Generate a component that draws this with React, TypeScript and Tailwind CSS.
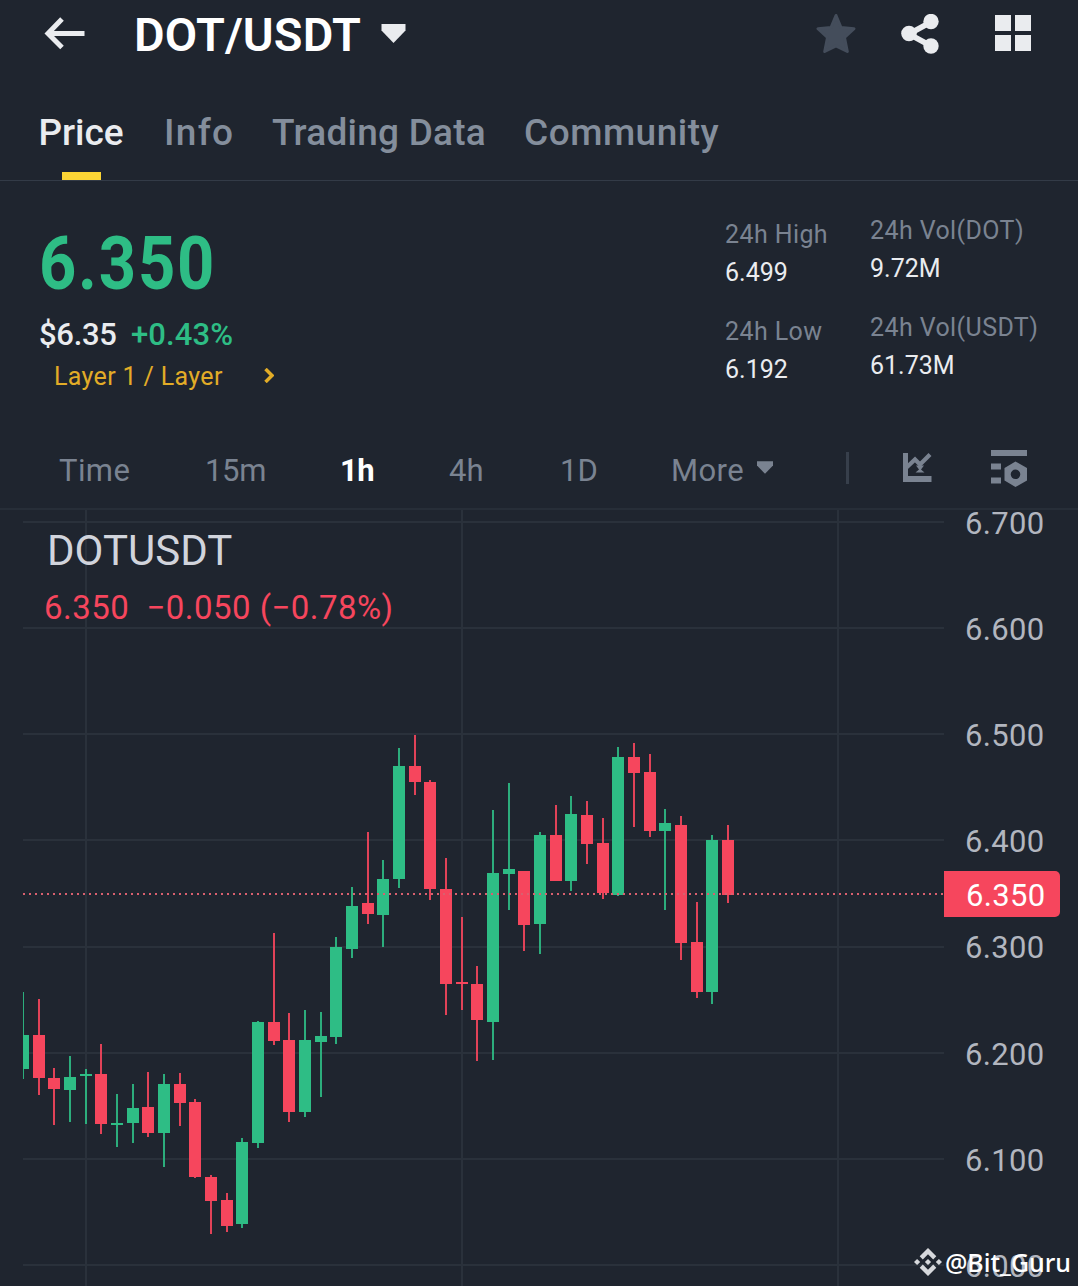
import { ReactNode } from "react";

type Candle = {
    x: number;
    high: number;
    top: number;
    bottom: number;
    low: number;
    up?: boolean;
};

const UP = "#2ebd85";
const DOWN = "#f6465d";

// [x, high, body top, body bottom, low, 1 = up / 0 = down]
const rawCandles: number[][] = [
    [17, 992, 1035, 1069, 1079, 1],
    [33, 999, 1035, 1078, 1095, 0],
    [48, 1068, 1078, 1089, 1125, 0],
    [64, 1056, 1077, 1090, 1122, 1],
    [80, 1069, 1074, 1076, 1124, 1],
    [95, 1044, 1074, 1124, 1134, 0],
    [111, 1094, 1123, 1125, 1147, 1],
    [127, 1084, 1108, 1123, 1143, 1],
    [142, 1072, 1107, 1133, 1137, 0],
    [158, 1074, 1084, 1133, 1167, 1],
    [174, 1073, 1084, 1103, 1126, 0],
    [189, 1099, 1102, 1177, 1178, 0],
    [205, 1175, 1177, 1201, 1234, 0],
    [221, 1193, 1200, 1226, 1232, 0],
    [236, 1138, 1142, 1224, 1228, 1],
    [252, 1021, 1022, 1143, 1148, 1],
    [268, 933, 1022, 1041, 1045, 0],
    [283, 1013, 1040, 1112, 1122, 0],
    [299, 1010, 1040, 1112, 1117, 1],
    [315, 1012, 1036, 1042, 1097, 1],
    [330, 937, 947, 1037, 1044, 1],
    [346, 887, 906, 949, 958, 1],
    [362, 832, 903, 914, 924, 0],
    [377, 860, 879, 915, 947, 1],
    [393, 748, 766, 879, 888, 1],
    [409, 735, 766, 782, 795, 0],
    [424, 780, 782, 889, 900, 0],
    [440, 858, 889, 984, 1015, 0],
    [456, 917, 982, 984, 1010, 0],
    [471, 966, 984, 1020, 1061, 0],
    [487, 810, 873, 1022, 1060, 1],
    [503, 783, 869, 874, 910, 1],
    [518, 871, 871, 925, 951, 0],
    [534, 832, 835, 924, 954, 1],
    [550, 805, 835, 881, 881, 0],
    [565, 796, 814, 881, 891, 1],
    [581, 801, 815, 844, 864, 0],
    [597, 818, 843, 893, 899, 0],
    [612, 747, 757, 895, 896, 1],
    [628, 743, 757, 773, 827, 0],
    [644, 754, 772, 831, 837, 0],
    [659, 809, 823, 831, 910, 1],
    [675, 816, 825, 943, 960, 0],
    [691, 902, 942, 992, 998, 0],
    [706, 835, 840, 992, 1004, 1],
    [722, 825, 840, 895, 903, 0],
];

const candles: Candle[] = rawCandles.map(([x, high, top, bottom, low, up]) => ({ x, high, top, bottom, low, up: up === 1 }));

const gridRows = [522, 628, 734, 840, 947, 1053, 1159, 1265];
const gridCols = [86, 462, 838];
const prices = ["6.700", "6.600", "6.500", "6.400", "6.300", "6.200", "6.100", "6.000"];

const Caret = ({ className }: { className: string }) => (
    <svg viewBox="0 0 24 19" className={className} fill="currentColor">
        <path d="M0 0h24v6.500L12 19 0 6.500z" />
    </svg>
);

const Header = () => (
    <header className="flex h-[90px] items-start pl-[44px] pr-[47px] text-[#eaecef]">
        <svg viewBox="0 0 42 34" className="mt-[16px] h-[34px] w-[42px]" fill="none" stroke="currentColor" strokeWidth="5">
            <path d="M40.500 17.500H5M18 3L4 17.500l14 14" />
        </svg>
        <h1 className="ml-[48px] w-[228px] whitespace-nowrap text-[47px] font-semibold leading-[70px] tracking-[0.1px] text-white">DOT/USDT</h1>
        <Caret className="ml-[19px] mt-[24px] h-[19px] w-[25px]" />
        <div className="ml-auto flex items-start">
            <svg viewBox="0 0 40 42" className="mt-[13px] h-[42px] w-[40px] text-[#444d5b]" fill="currentColor" stroke="currentColor" strokeWidth="3" strokeLinejoin="round">
                <path d="M20 2.500l5 12 13 1.200-9.500 8.800 2.800 14L20 32.800 8.700 38.500l2.800-14L2 15.700l13-1.200z" />
            </svg>
            <svg viewBox="0 0 38 40" className="ml-[45px] mt-[14px] h-[40px] w-[38px]" fill="currentColor">
                <path d="M8 20L30 8M8 20l22 12" stroke="currentColor" strokeWidth="5.500" />
                <circle cx="8" cy="19.500" r="7.800" />
                <circle cx="30" cy="7.500" r="7.700" />
                <circle cx="30" cy="32" r="7.700" />
            </svg>
            <div className="ml-[56px] mt-[15px] grid grid-cols-2 gap-x-[4px] gap-y-[4px]">
                <span className="h-[16px] w-[16px] bg-[#eaecef]" />
                <span className="h-[16px] w-[16px] bg-[#eaecef]" />
                <span className="h-[16px] w-[16px] bg-[#eaecef]" />
                <span className="h-[16px] w-[16px] bg-[#eaecef]" />
            </div>
        </div>
    </header>
);

const Tabs = () => (
    <nav className="flex h-[91px] items-start border-b border-[#333b47] pl-[38px] text-[37px] font-medium leading-[86px] text-[#848e9c]">
        <div className="flex h-[90px] w-[86px] flex-col items-center text-[#eaecef]">
            <span className="h-[82px] whitespace-nowrap tracking-[-0.1px]">Price</span>
            <span className="h-[8px] w-[39px] bg-[#fcd535]" />
        </div>
        <span className="ml-[40px] w-[108px] tracking-[1.3px]">Info</span>
        <span className="w-[252px] whitespace-nowrap tracking-[0.25px]">Trading Data</span>
        <span className="whitespace-nowrap tracking-[0.5px]">Community</span>
    </nav>
);

const Stat = ({ label, value }: { label: string; value: string }) => (
    <div className="h-[97px] whitespace-nowrap leading-[38px]">
        <p className="text-[25px] tracking-[0.4px] text-[#7a8391]">{label}</p>
        <p className="text-[25px] text-[#eaecef]">{value}</p>
    </div>
);

const Summary = () => (
    <section className="flex h-[247px] pl-[39px]">
        <div className="w-[686px]">
            <p className="mt-[41px] h-[84px] w-[220px] origin-left scale-x-[0.88] text-[74px] font-bold leading-[84px] tracking-[2px] text-[#2ebd85]">6.350</p>
            <div className="mt-[7px] flex h-[44px] text-[31px] font-medium leading-[44px]">
                <span className="w-[92px] tracking-[-0.3px] text-[#eaecef]">$6.35</span>
                <span className="tracking-[0.1px] text-[#2ebd85]">+0.43%</span>
            </div>
            <div className="flex h-[40px] items-center pl-[15px] text-[25px] text-[#e2ac27]">
                <span className="w-[210px] whitespace-nowrap tracking-[0.35px]">Layer 1 / Layer</span>
                <svg viewBox="0 0 10 15" className="mb-[4px] h-[15px] w-[10px]" fill="none" stroke="currentColor" strokeWidth="3.500">
                    <path d="M1.500 1l6.500 6.500-6.500 6.500" />
                </svg>
            </div>
        </div>
        <div className="mt-[35px] w-[145px]">
            <Stat label="24h High" value="6.499" />
            <Stat label="24h Low" value="6.192" />
        </div>
        <div className="mt-[31px]">
            <Stat label="24h Vol(DOT)" value="9.72M" />
            <Stat label="24h Vol(USDT)" value="61.73M" />
        </div>
    </section>
);

const Interval = ({ className, children }: { className: string; children: ReactNode }) => (
    <span className={`whitespace-nowrap pt-[6px] ${className}`}>{children}</span>
);

const Toolbar = () => (
    <div className="flex h-[82px] items-center border-b-2 border-[#272e38] pl-[59px] text-[31px] text-[#7a8391]">
        <Interval className="w-[146px] tracking-[0.4px]">Time</Interval>
        <Interval className="w-[135px] tracking-[-0.3px]">15m</Interval>
        <Interval className="w-[109px] font-bold tracking-[-0.5px] text-white">1h</Interval>
        <Interval className="w-[111px]">4h</Interval>
        <Interval className="w-[111px]">1D</Interval>
        <Interval className="w-[86px] tracking-[0.4px]">More</Interval>
        <Caret className="mb-[2px] h-[13px] w-[16px]" />
        <span className="ml-[73px] h-[32px] w-[3px] bg-[#373f4b]" />
        <svg viewBox="0 0 30 30" className="ml-[54px] h-[30px] w-[30px]" fill="currentColor">
            <path d="M0 0h5v23h23.500v6H0z" />
            <path d="M3.500 14.500L12 6.500l5 5L27 1.500" fill="none" stroke="currentColor" strokeWidth="4.200" />
            <path d="M12.500 19.500l3.500-3-3-4h8l-3 4 3.500 3z" />
        </svg>
        <svg viewBox="0 0 36 38" className="ml-[58px] h-[38px] w-[36px]" fill="currentColor">
            <path d="M0 1h36v6H0zM0 14.500h10v6H0zM0 28.500h10v6H0z" />
            <path fillRule="evenodd" d="M24.500 12.500L36 19v12.500L24.500 38 13.500 31.500V19zM24.500 20.500a4.800 4.800 0 1 0 0 9.600 4.800 4.800 0 0 0 0-9.600z" />
        </svg>
    </div>
);

const CandleChart = () => (
    <svg viewBox="0 510 944 776" className="h-[776px] w-[944px] shrink-0" shapeRendering="crispEdges">
        <defs>
            <clipPath id="plot">
                <rect x="23" y="510" width="921" height="776" />
            </clipPath>
        </defs>
        <g fill="#2a313b">
            {gridRows.map((y) => <rect key={y} x="23" y={y - 1} width="921" height="2" />)}
            {gridCols.map((x) => <rect key={x} x={x - 1} y="510" width="2" height="776" />)}
        </g>
        <g clipPath="url(#plot)">
            {candles.map((c) => (
                <g key={c.x} fill={c.up ? UP : DOWN}>
                    <rect x={c.x + 5} y={c.high} width="2" height={c.low - c.high} opacity="0.9" />
                    <rect x={c.x} y={c.top} width="12" height={c.bottom - c.top} />
                </g>
            ))}
        </g>
        <path d="M23 894H944" stroke="#d9606f" strokeWidth="2" strokeDasharray="2 4" />
    </svg>
);

const PriceAxis = () => (
    <div className="relative flex-1">
        <div className="-mt-[39px] flex flex-col pl-[21px] text-[31px] tracking-[0.3px] text-[#b2b6bf]">
            {prices.map((p) => <span key={p} className="flex h-[106.15px] items-center">{p}</span>)}
        </div>
        <div className="absolute left-0 top-[361px] flex h-[46px] w-[116px] items-center rounded-r-[5px] bg-[#f6465d] pl-[22px] pt-[4px] text-[31px] tracking-[0.3px] text-white">6.350</div>
    </div>
);

const Watermark = () => (
    <div className="absolute bottom-[6px] right-[7px] flex items-center">
        <svg viewBox="0 0 28 28" className="h-[28px] w-[28px]" fill="#d6d8dc">
            <path d="M14 0l8.300 8.300-3.100 3.100L14 6.200l-5.200 5.200-3.100-3.100zM14 28l8.300-8.300-3.100-3.100L14 21.800l-5.200-5.200-3.100 3.100zM14 10.900l3.100 3.100-3.100 3.100-3.100-3.100zM3.100 10.900L6.200 14l-3.100 3.100L0 14zM24.900 10.900L28 14l-3.100 3.100-3.100-3.100z" />
        </svg>
        <span className="ml-[3px] whitespace-nowrap font-['Noto_Sans'] text-[25px] font-medium leading-[36px] text-white">@Bit_Guru</span>
    </div>
);

const App = () => {
    return (
        <main className="relative h-[1286px] w-[1078px] overflow-hidden bg-[#1f252f] font-['Roboto',sans-serif]">
            <Header />
            <Tabs />
            <Summary />
            <Toolbar />
            <section className="relative flex h-[776px]">
                <CandleChart />
                <PriceAxis />
                <div className="absolute left-[45px] top-[13px] whitespace-nowrap">
                    <p className="h-[56px] pl-[2px] text-[42px] leading-[56px] text-[#d1d4dc]">DOTUSDT</p>
                    <p className="-ml-[1px] h-[56px] whitespace-pre text-[33px] leading-[58px] tracking-[0.46px] text-[#f6465d]">6.350  −0.050 (−0.78%)</p>
                </div>
            </section>
            <Watermark />
        </main>
    );
};

export default App;
